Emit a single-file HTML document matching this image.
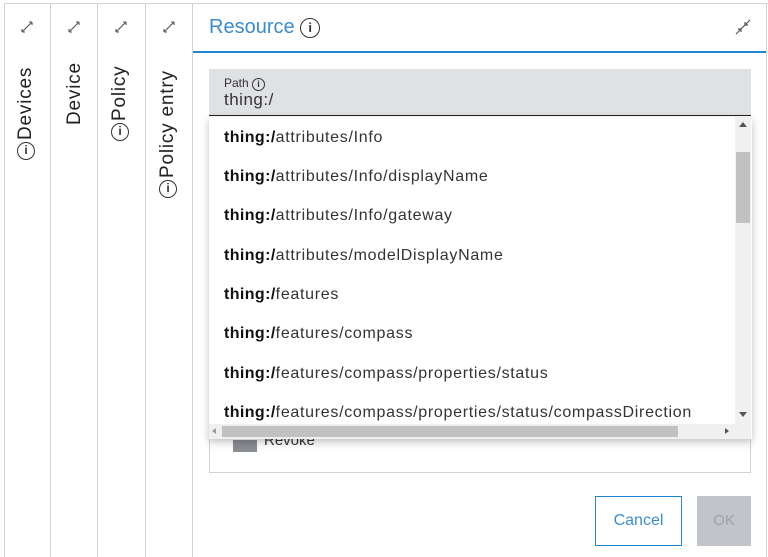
<!DOCTYPE html>
<html><head><style>
*{box-sizing:border-box;margin:0;padding:0}
body{width:768px;height:557px;background:#fff;font-family:"Liberation Sans",sans-serif;position:relative;overflow:hidden;color:#222}
.ab{position:absolute}
.vl{position:absolute;top:3px;bottom:0;width:1px;background:#cfd2d6}
.vt{position:absolute;transform-origin:left top;transform:rotate(-90deg);font-size:19px;letter-spacing:0.8px;color:#222;white-space:nowrap;display:flex;align-items:center}
.ic{display:inline-block;width:18px;height:18px;border:1.5px solid #333;border-radius:50%;font-size:12px;line-height:15px;text-align:center;font-weight:bold;color:#333;margin-right:2px;letter-spacing:0}
.exp{position:absolute;top:19px;width:16px;height:16px}
.it{position:absolute;left:224px;font-size:16px;letter-spacing:0.7px;color:#333}
.it b{color:#111;letter-spacing:0.4px}
</style></head><body>
<div class="ab" style="left:4px;top:3px;right:0;height:1px;background:#cfd2d6"></div>
<div class="vl" style="left:4px"></div>
<div class="vl" style="left:50px"></div>
<div class="vl" style="left:97px"></div>
<div class="vl" style="left:145px"></div>
<div class="vl" style="left:192px"></div>
<div class="vl" style="left:766px"></div>
<svg class="exp" style="left:19px" viewBox="0 0 16 16"><path d="M3 13L13 3M3 13v-3M3 13h3M13 3h-3M13 3v3" stroke="#555" stroke-width="1.1" fill="none"/></svg>
<svg class="exp" style="left:66px" viewBox="0 0 16 16"><path d="M3 13L13 3M3 13v-3M3 13h3M13 3h-3M13 3v3" stroke="#555" stroke-width="1.1" fill="none"/></svg>
<svg class="exp" style="left:113px" viewBox="0 0 16 16"><path d="M3 13L13 3M3 13v-3M3 13h3M13 3h-3M13 3v3" stroke="#555" stroke-width="1.1" fill="none"/></svg>
<svg class="exp" style="left:161px" viewBox="0 0 16 16"><path d="M3 13L13 3M3 13v-3M3 13h3M13 3h-3M13 3v3" stroke="#555" stroke-width="1.1" fill="none"/></svg>
<div class="vt" style="left:15px;top:160px"><span class="ic" style="transform:rotate(90deg)">i</span>Devices</div>
<div class="vt" style="left:64px;top:125px">Device</div>
<div class="vt" style="left:109px;top:141px"><span class="ic" style="transform:rotate(90deg)">i</span>Policy</div>
<div class="vt" style="left:157px;top:198px"><span class="ic" style="transform:rotate(90deg)">i</span>Policy entry</div>
<div class="ab" style="left:209px;top:16px;font-size:20px;color:#3c8ccb;display:flex;align-items:center">Resource&nbsp;<span class="ic" style="border-color:#333;width:20px;height:20px;line-height:17px;font-size:13px">i</span></div>
<svg class="ab" style="left:735px;top:19px" width="16" height="16" viewBox="0 0 16 16"><path d="M1 15L15 1M6 10h-3M6 10v3M10 6h3M10 6v-3" stroke="#555" stroke-width="1.2" fill="none"/></svg>
<div class="ab" style="left:193px;top:51px;width:573px;height:2px;background:#1f87cf"></div>
<div class="ab" style="left:209px;top:69px;width:542px;height:47px;background:#dfe1e4;border-bottom:1.5px solid #222"></div>
<div class="ab" style="left:224px;top:76px;font-size:12px;color:#333">Path <span class="ic" style="width:13px;height:13px;font-size:9px;line-height:11px;border-width:1px">i</span></div>
<div class="ab" style="left:224px;top:90px;font-size:17px;letter-spacing:0.5px;color:#333">thing:/</div>
<div class="ab" style="left:209px;top:472px;width:542px;height:1px;background:#cfd2d6"></div>
<div class="ab" style="left:209px;top:430px;width:1px;height:43px;background:#cfd2d6"></div>
<div class="ab" style="left:750px;top:430px;width:1px;height:43px;background:#cfd2d6"></div>
<div class="ab" style="left:233px;top:440px;width:24px;height:12px;background:#8a8d92"></div>
<div class="ab" style="left:264px;top:432px;font-size:15px;color:#333">Revoke</div>
<div class="ab" style="left:209px;top:117px;width:543px;height:322px;background:#fff;box-shadow:0 3px 8px rgba(0,0,0,.25);overflow:hidden"></div>
<div class="it" style="top:129px"><b>thing:/</b>attributes/Info</div>
<div class="it" style="top:168px"><b>thing:/</b>attributes/Info/displayName</div>
<div class="it" style="top:207px"><b>thing:/</b>attributes/Info/gateway</div>
<div class="it" style="top:247px"><b>thing:/</b>attributes/modelDisplayName</div>
<div class="it" style="top:286px"><b>thing:/</b>features</div>
<div class="it" style="top:325px"><b>thing:/</b>features/compass</div>
<div class="it" style="top:365px"><b>thing:/</b>features/compass/properties/status</div>
<div class="it" style="top:404px"><b>thing:/</b>features/compass/properties/status/compassDirection</div>
<div class="ab" style="left:735px;top:117px;width:16px;height:308px;background:#f0f0f0"></div>
<div class="ab" style="left:736px;top:152px;width:14px;height:71px;background:#c1c1c1"></div>
<div class="ab" style="left:739px;top:122px;border:4px solid transparent;border-bottom:5px solid #555;border-top:0"></div>
<div class="ab" style="left:739px;top:412px;border:4px solid transparent;border-top:5px solid #555;border-bottom:0"></div>
<div class="ab" style="left:209px;top:424px;width:542px;height:15px;background:#f0f0f0"></div>
<div class="ab" style="left:222px;top:426px;width:456px;height:11px;background:#c1c1c1"></div>
<div class="ab" style="left:212px;top:428px;border:3px solid transparent;border-right:4px solid #999;border-left:0"></div>
<div class="ab" style="left:725px;top:428px;border:3px solid transparent;border-left:4px solid #555;border-right:0"></div>
<div class="ab" style="left:595px;top:496px;width:87px;height:50px;border:1.5px solid #1f87cf;color:#3c8ccb;font-size:16px;text-align:center;line-height:47px">Cancel</div>
<div class="ab" style="left:697px;top:496px;width:54px;height:50px;background:#c1c4c8;color:#9ea2a7;font-size:15px;text-align:center;line-height:50px">OK</div>
</body></html>
